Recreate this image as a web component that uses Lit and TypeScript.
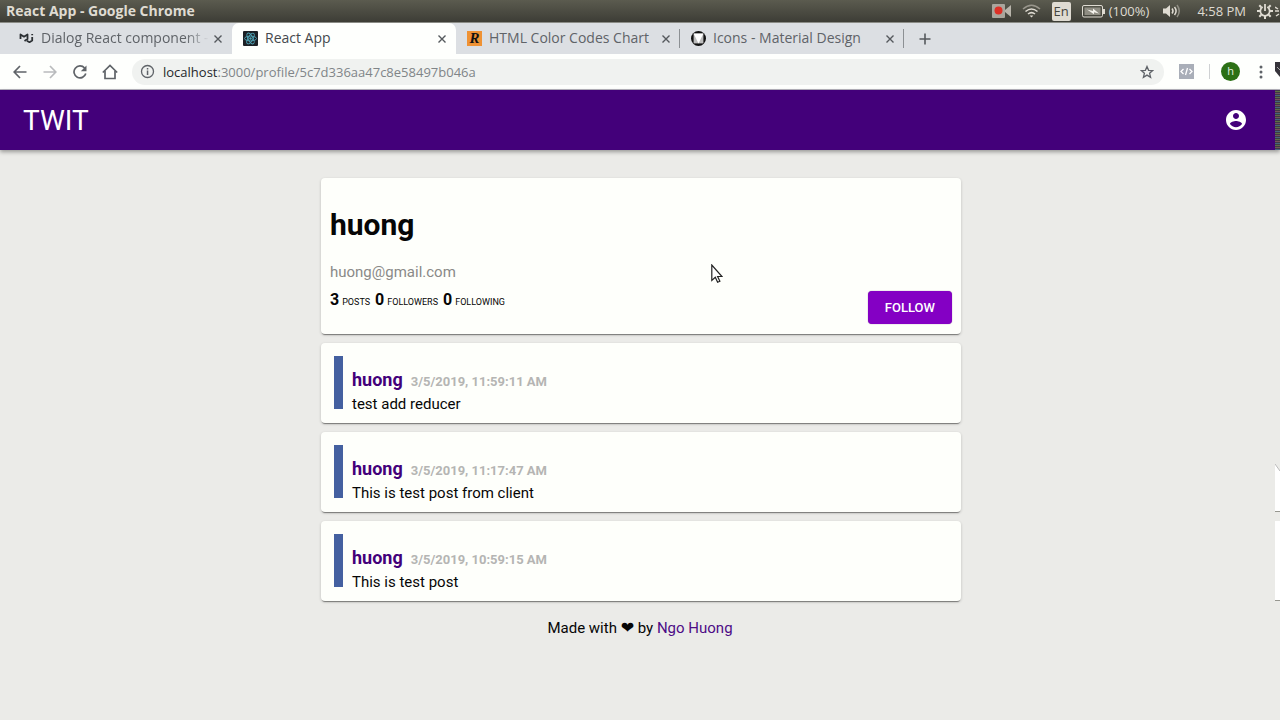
import { LitElement, html, css, svg } from "lit";
import { customElement, property } from "lit/decorators.js";

interface Post {
  author: string;
  time: string;
  text: string;
}

interface Tab {
  title: string;
  icon: unknown;
  state: string;
}

const muiIcon = svg`<svg class="fav" viewBox="0 0 15 15" fill="none" stroke="#2b2f33" stroke-width="1.8" stroke-linejoin="round"><path d="M1.500 8V3.500L5 5.700 8.500 3.500V8L5.500 10"/><path d="M7.800 9.800 10.500 11.200 13.200 9.500V6M13.200 3v1.300"/></svg>`;
const reactIcon = svg`<svg class="fav" viewBox="0 0 15 15"><rect width="15" height="15" rx="1" fill="#1c2025"/><g fill="none" stroke="#4fa3b5" stroke-width=".9"><ellipse cx="7.500" cy="7.500" rx="6" ry="2.400"/><ellipse cx="7.500" cy="7.500" rx="6" ry="2.400" transform="rotate(60 7.500 7.500)"/><ellipse cx="7.500" cy="7.500" rx="6" ry="2.400" transform="rotate(120 7.500 7.500)"/></g><circle cx="7.500" cy="7.500" r="1.200" fill="#4fa3b5"/></svg>`;
const materialIcon = svg`<svg class="fav" viewBox="0 0 15 15"><circle cx="7.500" cy="7.500" r="7.500" fill="#111"/><path d="M2.600 2.600h9.800v9.800H2.600z" fill="#bdbdbd"/><path d="M2.600 2.600h9.800L7.500 12.400z" fill="#fff"/></svg>`;

@customElement("desktop-bar")
class DesktopBar extends LitElement {
  static styles = css`
    :host {
      display: flex;
      align-items: center;
      box-sizing: border-box;
      height: 23px;
      padding: 0 7px 0 6px;
      background: linear-gradient(#5b5b4f, #3d3d36);
      border-bottom: 1px solid #8b8c86;
      color: #dfdbd2;
      font: 14px/22px "Open Sans", sans-serif;
    }
    .title { flex: 1; font-size: 14px; font-weight: 700; }
    .status { display: flex; align-items: center; gap: 11px; }
    .power { display: flex; align-items: center; gap: 4px; margin-right: 3px; }
    .text { font-size: 13px; }
    .lang {
      width: 19px;
      height: 19px;
      border-radius: 2px;
      background: #dfdbd2;
      color: #44443d;
      font-size: 13px;
      line-height: 19px;
      text-align: center;
    }
    .clock { margin-left: 5px; font-size: 13px; }
    svg { display: block; }
  `;
  render() {
    return html`
      <span class="title">React App - Google Chrome</span>
      <div class="status">
        <svg width="19" height="14" viewBox="0 0 19 14"><rect y="0" width="13" height="14" rx="1" fill="#a9a59c"/><path d="M13 6l6-5v12l-6-5z" fill="#b8b4ab"/><circle cx="6.500" cy="6.500" r="4" fill="#dd3026"/></svg>
        <svg width="19" height="14" viewBox="0 0 19 14" fill="none" stroke-width="1.600"><path d="M1 5Q9.500-2.500 18 5" stroke="#99968c"/><path d="M3.500 7.500q6-5 12 0M6 10q3.500-2.800 7 0" stroke="#dfdbd2"/><path d="M7.600 11.500h3.800L9.500 13.600z" fill="#dfdbd2"/></svg>
        <span class="lang">En</span>
        <span class="power">
          <svg width="23" height="13" viewBox="0 0 23 13"><rect x=".5" y=".5" width="20" height="11.500" rx="1.500" fill="none" stroke="#dfdbd2"/><rect x="2.500" y="2.500" width="16" height="7.500" fill="#8f8d83"/><path d="M21 4h2v5h-2z" fill="#dfdbd2"/><path d="M5 4.500l6 1.500V3.500l6 5-5-1.200v2z" fill="#f4f2ec"/></svg>
          <span class="text">(100%)</span>
        </span>
        <svg width="18" height="14" viewBox="0 0 18 14" fill="none" stroke="#dfdbd2" stroke-width="1.500"><path d="M0 4.500h3L7 1v12L3 9.500H0z" fill="#dfdbd2" stroke="none"/><path d="M9 4.500q2 2.500 0 5M11.500 3q3.200 4 0 8"/><path d="M14 1q4.500 6 0 12" stroke="#8f8d83"/></svg>
        <span class="clock">4:58 PM</span>
        <svg width="16" height="16" viewBox="0 0 16 16" fill="none" stroke="#dfdbd2"><path d="M5.700 4A4.700 4.700 0 1 0 10.300 4" stroke-width="1.800"/><path d="M8 1v7" stroke-width="1.800"/><path d="M0 8h3M13 8h3M2.300 2.300l2 2M13.700 2.300l-2 2M2.300 13.700l2-2M13.700 13.700l-2-2M8 13v3" stroke-width="2"/></svg>
      </div>
    `;
  }
}

@customElement("browser-chrome")
class BrowserChrome extends LitElement {
  static styles = css`
    :host { display: block; font: 14px/20px "Open Sans", sans-serif; color: #5f6368; }
    button { border: 0; padding: 0; background: none; color: inherit; font: inherit; display: grid; place-items: center; }
    svg { display: block; }
    .tabs { display: flex; height: 31px; padding-left: 8px; background: #dcdfe3; }
    .tab {
      flex: 0 1 224px;
      min-width: 0;
      box-sizing: border-box;
      display: flex;
      align-items: center;
      padding: 0 6px 0 11px;
    }
    .tab.active { background: #fefffd; border-radius: 7px 7px 0 0; color: #45494d; }
    .tab.divided { background: linear-gradient(#8c9094, #8c9094) right center / 1px 19px no-repeat; }
    .tab.long .label { mask-image: linear-gradient(90deg, #000 145px, transparent 168px); }
    .fav { width: 15px; height: 15px; flex: none; }
    .mark {
      flex: none;
      width: 15px;
      height: 15px;
      background: #ef9234;
      color: #111;
      font: italic 700 15px/15px "Liberation Serif", serif;
      text-align: center;
    }
    .label {
      flex: 1;
      min-width: 0;
      margin-left: 7px;
      padding-bottom: 2px;
      white-space: nowrap;
      font-size: 14px;
    }
    .close { flex: none; width: 16px; height: 16px; }
    .new { width: 42px; }
    .toolbar {
      display: flex;
      align-items: center;
      height: 35px;
      padding: 0 4px 0 5px;
      background: #fefffd;
      border-bottom: 1px solid #b6b4bd;
    }
    .tool { width: 30px; height: 30px; }
    .dim { color: #b9bbbd; }
    .omnibox {
      flex: 1;
      display: flex;
      align-items: center;
      height: 26px;
      margin: 0 15px 0 7px;
      padding: 0 10px 0 8px;
      gap: 8px;
      border-radius: 13px;
      background: #f0f2f0;
    }
    .url { flex: 1; font-size: 13px; color: #808588; }
    .host { color: #25282b; }
    .rule { width: 1px; height: 15px; margin: 0 11px 0 15px; background: #cfd1d3; }
    .avatar {
      width: 19px;
      height: 19px;
      border-radius: 50%;
      background: #2c7016;
      color: #e8f0e4;
      font-size: 11px;
      line-height: 18px;
      text-align: center;
    }
    .menu { width: 30px; height: 30px; margin-left: 6px; }
  `;
  private tabs: Tab[] = [
    { title: "Dialog React component -", icon: muiIcon, state: "long" },
    { title: "React App", icon: reactIcon, state: "active" },
    { title: "HTML Color Codes Chart", icon: html`<span class="mark">R</span>`, state: "divided" },
    { title: "Icons - Material Design", icon: materialIcon, state: "divided" },
  ];
  render() {
    return html`
      <div class="tabs">
        ${this.tabs.map(
          (t) => html`<div class="tab ${t.state}">
            ${t.icon}<span class="label">${t.title}</span>
            <button class="close" aria-label="Close tab"><svg width="8" height="8" viewBox="0 0 8 8" stroke="#55595d" stroke-width="1.400"><path d="M.5.5l7 7M7.500.5l-7 7"/></svg></button>
          </div>`
        )}
        <button class="new" aria-label="New tab"><svg width="12" height="12" viewBox="0 0 12 12" stroke="#55595d" stroke-width="1.600"><path d="M6 .5v11M.5 6h11"/></svg></button>
      </div>
      <div class="toolbar">
        <button class="tool" aria-label="Back"><svg width="14" height="14" viewBox="0 0 14 14" fill="none" stroke="currentColor" stroke-width="1.700"><path d="M13.500 7H1.500M7 1 1.200 7 7 13"/></svg></button>
        <button class="tool dim" aria-label="Forward"><svg width="14" height="14" viewBox="0 0 14 14" fill="none" stroke="currentColor" stroke-width="1.700"><path d="M.5 7h12M7 1l5.800 6L7 13"/></svg></button>
        <button class="tool" aria-label="Reload"><svg width="14" height="14" viewBox="0 0 14 14"><path d="M12.800 8.500A6 6 0 1 1 11.600 3" fill="none" stroke="currentColor" stroke-width="1.700"/><path d="M13.500.5v5.700H7.800z" fill="currentColor"/></svg></button>
        <button class="tool" aria-label="Home"><svg width="16" height="16" viewBox="0 0 16 16" fill="none" stroke="currentColor" stroke-width="1.700"><path d="M.8 8.500 8 1.500l7.200 7"/><path d="M3 7v7.500h10V7"/></svg></button>
        <div class="omnibox">
          <svg width="15" height="15" viewBox="0 0 15 15"><circle cx="7.500" cy="7.500" r="6" fill="none" stroke="#5f6368" stroke-width="1.300"/><path d="M6.800 6.600h1.500V11H6.800zM6.800 4h1.500v1.500H6.800z" fill="#5f6368"/></svg>
          <span class="url"><span class="host">localhost</span>:3000/profile/5c7d336aa47c8e58497b046a</span>
          <button aria-label="Bookmark"><svg width="14" height="14" viewBox="0 0 14 14" fill="none" stroke="#5f6368" stroke-width="1.300"><path d="M7 1.500l1.600 3.800 4.100.3-3.100 2.700 1 4L7 10.100l-3.600 2.200 1-4L1.300 5.600l4.100-.3z"/></svg></button>
        </div>
        <svg width="15" height="15" viewBox="0 0 15 15" fill="none" stroke="#fff" stroke-width="1.300"><path d="M0 0h15v15H0z" fill="#a9aeb8" stroke="none"/><path d="M4.500 5 2 7.500 4.500 10M10.500 5 13 7.500 10.500 10M8.500 4l-2 7"/></svg>
        <span class="rule"></span>
        <span class="avatar">h</span>
        <button class="menu" aria-label="Menu"><svg width="4" height="14" viewBox="0 0 4 14" fill="#5f6368"><circle cx="2" cy="2" r="1.500"/><circle cx="2" cy="7" r="1.500"/><circle cx="2" cy="12" r="1.500"/></svg></button>
      </div>
    `;
  }
}

@customElement("post-card")
class PostCard extends LitElement {
  @property({ attribute: false }) post!: Post;
  static styles = css`
    :host {
      display: flex;
      gap: 9px;
      padding: 13px 13px 10px;
      border-radius: 4px;
      background: #fefffb;
      box-shadow: 0 1px 3px rgba(0, 0, 0, 0.2), 0 2px 1px -1px rgba(0, 0, 0, 0.4);
    }
    .bar { flex: none; width: 9px; margin-bottom: 4px; background: #4460a0; }
    .body { padding-top: 12px; }
    .head { display: flex; align-items: baseline; gap: 8px; line-height: 24px; }
    .author { color: #43007a; font-size: 18px; font-weight: 700; text-decoration: none; }
    .time { color: #b5b5b3; font-size: 13px; line-height: 18px; font-weight: 700; }
    .text { margin: 3px 0 0; font-size: 15px; line-height: 18px; }
  `;
  render() {
    return html`
      <div class="bar"></div>
      <div class="body">
        <div class="head"><a class="author" href="#">${this.post.author}</a><time class="time">${this.post.time}</time></div>
        <p class="text">${this.post.text}</p>
      </div>
    `;
  }
}

@customElement("app-root")
class AppRoot extends LitElement {
  static styles = css`
    :host {
      display: block;
      position: relative;
      min-height: 100vh;
      overflow: hidden;
      background: #ebebe8;
      color: #060606;
      font: 15px/18px Roboto, sans-serif;
    }
    .appbar {
      position: relative;
      display: flex;
      align-items: center;
      justify-content: space-between;
      box-sizing: border-box;
      height: 60px;
      padding: 0 34px 0 23px;
      background: #43007a;
      box-shadow: 0 2px 4px rgba(0, 0, 0, 0.35);
    }
    .brand { padding-top: 2px; color: #fff; font-size: 28px; line-height: 32px; text-decoration: none; }
    .account { border: 0; padding: 0; background: none; display: block; }
    .account svg { display: block; }
    main { display: grid; gap: 9px; width: 50%; margin: 28px auto 0; padding-left: 2px; }
    .profile {
      box-sizing: border-box;
      padding: 28px 9px 10px;
      border-radius: 4px;
      background: #fefffb;
      box-shadow: 0 1px 3px rgba(0, 0, 0, 0.2), 0 2px 1px -1px rgba(0, 0, 0, 0.4);
    }
    h1 { margin: 0 0 20px; font-size: 30px; line-height: 37px; font-weight: 700; }
    .mail { color: #8a8a88; }
    .foot { display: flex; justify-content: space-between; align-items: flex-start; }
    .stats { display: flex; gap: 5px; margin-top: 10px; }
    .stat { display: flex; align-items: baseline; gap: 3px; font-size: 9px; }
    .stat b { font-size: 16px; }
    .follow {
      margin-top: 10px;
      height: 33px;
      padding: 0 17px;
      border: 0;
      border-radius: 4px;
      background: #8400c4;
      color: #fff;
      font: 500 13px/33px Roboto, sans-serif;
      box-shadow: 0 0 1px rgba(60, 0, 90, 0.7);
    }
    footer { margin-top: 18px; text-align: center; }
    footer a { color: #4d0c86; text-decoration: none; }
    .heart { font-family: "DejaVu Sans", sans-serif; font-size: 16px; }
    .edge { position: absolute; top: 0; right: 0; width: 5px; height: 720px; }
    .pointer { position: absolute; left: 711px; top: 264px; }
  `;
  private posts: Post[] = [
    { author: "huong", time: "3/5/2019, 11:59:11 AM", text: "test add reducer" },
    { author: "huong", time: "3/5/2019, 11:17:47 AM", text: "This is test post from client" },
    { author: "huong", time: "3/5/2019, 10:59:15 AM", text: "This is test post" },
  ];
  render() {
    return html`
      <desktop-bar></desktop-bar>
      <browser-chrome></browser-chrome>
      <header class="appbar">
        <a class="brand" href="#">TWIT</a>
        <button class="account" aria-label="Account"><svg width="20" height="20" viewBox="2 2 20 20" fill="#fff"><path d="M12 2C6.480 2 2 6.480 2 12s4.480 10 10 10 10-4.480 10-10S17.520 2 12 2zm0 3c1.660 0 3 1.340 3 3s-1.340 3-3 3-3-1.340-3-3 1.340-3 3-3zm0 14.200c-2.500 0-4.710-1.280-6-3.220.030-1.990 4-3.080 6-3.080 1.990 0 5.970 1.090 6 3.080-1.290 1.940-3.500 3.220-6 3.220z"/></svg></button>
      </header>
      <main>
        <section class="profile">
          <h1>huong</h1>
          <div class="mail">huong@gmail.com</div>
          <div class="foot">
            <div class="stats">
              <span class="stat"><b>3</b>POSTS</span>
              <span class="stat"><b>0</b>FOLLOWERS</span>
              <span class="stat"><b>0</b>FOLLOWING</span>
            </div>
            <button class="follow">FOLLOW</button>
          </div>
        </section>
        ${this.posts.map((p) => html`<post-card .post=${p}></post-card>`)}
      </main>
      <footer>Made with <span class="heart">❤&#xFE0E;</span> by <a href="#">Ngo Huong</a></footer>
      <svg class="edge" viewBox="0 0 5 720">
        <defs><pattern id="noise" width="5" height="6" patternUnits="userSpaceOnUse"><path d="M0 0h5v6H0z" fill="#403a48"/><path d="M0 1.500h5" stroke="#5d7046"/><path d="M0 3.500h5" stroke="#75525c"/><path d="M0 5.500h5" stroke="#46657c"/></pattern></defs>
        <path d="M0 7l3 2M0 11h4M1 16l3-2" stroke="#dfdbd2" stroke-width="1.500"/>
        <path d="M0 62h5v15L0 71z" fill="#36343a"/><path d="M2 67l3 3" stroke="#aaa"/>
        <path d="M0 90h5v60H0z" fill="url(#noise)"/>
        <path d="M0 464l5 7v40H0zM0 521h5v79H0z" fill="#fff"/>
        <path d="M0 511.500h5M0 600.500h5" stroke="#96968f"/><path d="M0 464l5 7" stroke="#bbb"/>
      </svg>
      <svg class="pointer" width="12" height="20" viewBox="0 0 12 20"><path d="M.8 1v15.500l3.500-3.200 2.300 4.900 2.300-1-2.300-4.700h4.400z" fill="#fff" stroke="#222" stroke-width="1.200"/></svg>
    `;
  }
}
